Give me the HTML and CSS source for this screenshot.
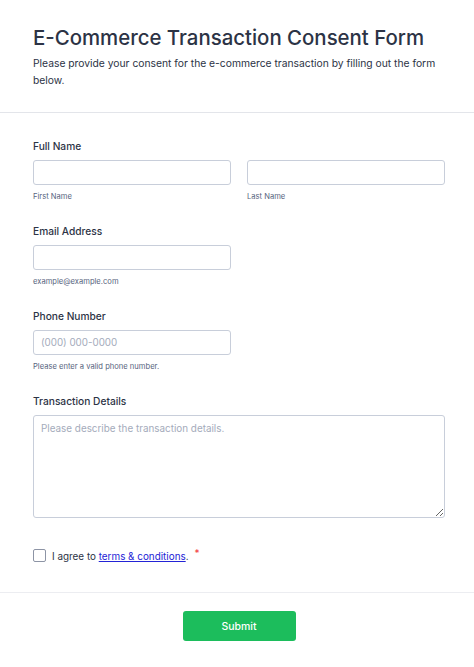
FILE: index.html
```html
<!DOCTYPE html>
<html lang="en">
<head>
    <meta charset="UTF-8">
    <meta name="viewport" content="width=device-width, initial-scale=1.0">
    <title>E-Commerce Transaction Consent Form</title>
    <link rel="stylesheet" href="styles.css">
</head>
<body>
    <div class="form-container">
        <div class="form-header">
            <h1>E-Commerce Transaction Consent Form</h1>
            <p>Please provide your consent for the e-commerce transaction by filling out the form below.</p>
        </div>
        <form class="form-body">
            <div class="field">
                <label class="field-label">Full Name</label>
                <div class="name-row">
                    <div class="name-col">
                        <input type="text" id="first-name" class="text-input">
                        <span class="sublabel">First Name</span>
                    </div>
                    <div class="name-col">
                        <input type="text" id="last-name" class="text-input">
                        <span class="sublabel">Last Name</span>
                    </div>
                </div>
            </div>
            <div class="field">
                <label class="field-label" for="email">Email Address</label>
                <input type="email" id="email" class="text-input half">
                <span class="sublabel">example@example.com</span>
            </div>
            <div class="field">
                <label class="field-label" for="phone">Phone Number</label>
                <input type="tel" id="phone" class="text-input half" placeholder="(000) 000-0000">
                <span class="sublabel">Please enter a valid phone number.</span>
            </div>
            <div class="field">
                <label class="field-label" for="details">Transaction Details</label>
                <textarea id="details" class="text-area" placeholder="Please describe the transaction details."></textarea>
            </div>
            <div class="consent">
                <input type="checkbox" id="agree" class="checkbox">
                <label for="agree">I agree to <a href="#">terms &amp; conditions</a>.</label>
                <span class="required">*</span>
            </div>
        </form>
        <div class="form-footer">
            <button class="btn" type="button">Submit</button>
        </div>
    </div>
</body>
</html>
```

FILE: styles.css
```css
body {
    font-family: Inter, "Noto Sans", sans-serif;
    margin: 0;
    padding: 0;
    background-color: #ffffff;
    color: #2c3345;
}
.form-header {
    padding: 24px 29px 23px 33px;
    background-color: #ffffff;
    border-bottom: 1px solid #e3e5ea;
}
.form-header h1 {
    margin: 0;
    font-size: 20.4px;
    font-weight: 500;
    line-height: 28px;
}
.form-header p {
    margin: 3px 0 0;
    font-size: 10.3px;
    line-height: 17px;
    color: #2c3345;
}
.form-body {
    padding: 26px 29px 0 33px;
}
.field {
    display: flex;
    flex-direction: column;
    margin-bottom: 22px;
}
.field-label {
    font-size: 10.2px;
    font-weight: 500;
    line-height: 14px;
    margin-bottom: 7px;
}
.name-row {
    display: flex;
    gap: 16px;
}
.name-col {
    flex: 1;
    display: flex;
    flex-direction: column;
}
.text-input {
    box-sizing: border-box;
    height: 25px;
    width: 100%;
    padding: 0 7px;
    border: 1px solid #c8ceda;
    border-radius: 3px;
    font-family: inherit;
    font-size: 9.8px;
    color: #2c3345;
}
.text-input.half {
    width: 198px;
}
.text-input::placeholder,
.text-area::placeholder {
    color: #a4abbb;
}
.sublabel {
    margin-top: 6px;
    font-size: 7.6px;
    line-height: 11px;
    color: #57647e;
}
.text-area {
    box-sizing: border-box;
    height: 103px;
    width: 100%;
    padding: 6px 7px;
    border: 1px solid #c8ceda;
    border-radius: 3px;
    font-family: inherit;
    font-size: 9.9px;
    resize: vertical;
}
.consent {
    display: flex;
    align-items: center;
    padding: 9px 0 30px;
    font-size: 9.9px;
    color: #2c3345;
}
.checkbox {
    appearance: none;
    width: 13px;
    height: 13px;
    margin: 0 6px 0 0;
    border: 1px solid #8d94a5;
    border-radius: 2px;
    background: #ffffff;
}
.consent a {
    color: #2323d6;
}
.required {
    color: #f23a3c;
    margin-left: 6px;
    font-size: 10px;
    position: relative;
    top: -3px;
}
.form-footer {
    border-top: 1px solid #ecedf1;
    display: flex;
    justify-content: center;
    padding: 18px 29px 26px 33px;
}
.btn {
    background-color: #1cbd5c;
    color: #fff;
    border: none;
    width: 113px;
    height: 30px;
    border-radius: 3px;
    font-family: inherit;
    font-size: 10.5px;
    font-weight: 500;
    cursor: pointer;
}
```
